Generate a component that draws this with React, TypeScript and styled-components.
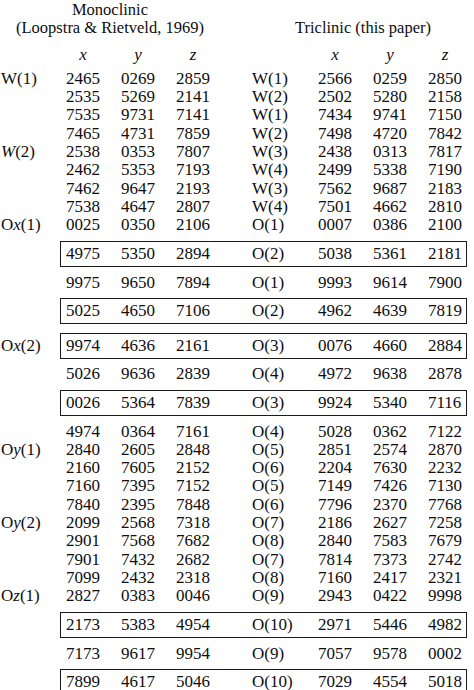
import React from "react";
import styled, { createGlobalStyle } from "styled-components";

const GlobalStyle = createGlobalStyle`
  html, body {
    margin: 0;
    padding: 0;
    background: #ffffff;
  }
  body {
    overflow: hidden;
  }
`;

const Page = styled.div`
  width: 474px;
  padding-top: 1px;
  background: #ffffff;
  color: #0e0e0e;
  font-family: "Liberation Serif", "Times New Roman", serif;
  font-size: 17px;
`;

const TitleRow = styled.div`
  display: grid;
  grid-template-columns: 220px 33px 220px;
  font-size: 16.5px;
  line-height: 17.5px;
`;

const TitleBlock = styled.div<{ $col: number }>`
  grid-column: ${(p) => p.$col};
  align-self: end;
  display: flex;
  flex-direction: column;
  align-items: center;
  white-space: nowrap;
`;

const TitleLine = styled.div`
  height: 17.5px;
`;

const Table = styled.div`
  display: flex;
  flex-direction: column;
  margin-top: 9.85px;
`;

const Row = styled.div<{ $boxed?: boolean; $top: number }>`
  display: flex;
  flex: none;
  height: ${(p) => (p.$boxed ? "26px" : "18.3px")};
  line-height: ${(p) => (p.$boxed ? "24px" : "18.3px")};
  margin-top: ${(p) => p.$top}px;
`;

const Label = styled.div`
  flex: none;
  width: 60px;
  padding-left: 1px;
  box-sizing: border-box;
  white-space: nowrap;
  align-self: center;
`;

const Values = styled.div<{ $boxed?: boolean }>`
  flex: none;
  display: flex;
  align-items: center;
  box-sizing: border-box;
  width: 407px;
  height: 100%;
  padding: 0 4px 0 5px;
  border: 1px solid ${(p) => (p.$boxed ? "#1a1a1a" : "transparent")};
`;

const Cell = styled.div<{ $w: number }>`
  flex: none;
  width: ${(p) => p.$w}px;
  white-space: nowrap;
`;

const AxisMark = styled.span`
  display: block;
  width: 34px;
  text-align: center;
  font-style: italic;
`;

const I = styled.i`
  font-style: italic;
`;

type RowData = {
  left: React.ReactNode;
  l: [string, string, string];
  right: string;
  r: [string, string, string];
  boxed?: boolean;
};

const rows: RowData[] = [
  { left: "W(1)", l: ["2465", "0269", "2859"], right: "W(1)", r: ["2566", "0259", "2850"] },
  { left: "", l: ["2535", "5269", "2141"], right: "W(2)", r: ["2502", "5280", "2158"] },
  { left: "", l: ["7535", "9731", "7141"], right: "W(1)", r: ["7434", "9741", "7150"] },
  { left: "", l: ["7465", "4731", "7859"], right: "W(2)", r: ["7498", "4720", "7842"] },
  { left: <><I>W</I>(2)</>, l: ["2538", "0353", "7807"], right: "W(3)", r: ["2438", "0313", "7817"] },
  { left: "", l: ["2462", "5353", "7193"], right: "W(4)", r: ["2499", "5338", "7190"] },
  { left: "", l: ["7462", "9647", "2193"], right: "W(3)", r: ["7562", "9687", "2183"] },
  { left: "", l: ["7538", "4647", "2807"], right: "W(4)", r: ["7501", "4662", "2810"] },
  { left: <>O<I>x</I>(1)</>, l: ["0025", "0350", "2106"], right: "O(1)", r: ["0007", "0386", "2100"] },
  { left: "", l: ["4975", "5350", "2894"], right: "O(2)", r: ["5038", "5361", "2181"], boxed: true },
  { left: "", l: ["9975", "9650", "7894"], right: "O(1)", r: ["9993", "9614", "7900"] },
  { left: "", l: ["5025", "4650", "7106"], right: "O(2)", r: ["4962", "4639", "7819"], boxed: true },
  { left: <>O<I>x</I>(2)</>, l: ["9974", "4636", "2161"], right: "O(3)", r: ["0076", "4660", "2884"], boxed: true },
  { left: "", l: ["5026", "9636", "2839"], right: "O(4)", r: ["4972", "9638", "2878"] },
  { left: "", l: ["0026", "5364", "7839"], right: "O(3)", r: ["9924", "5340", "7116"], boxed: true },
  { left: "", l: ["4974", "0364", "7161"], right: "O(4)", r: ["5028", "0362", "7122"] },
  { left: <>O<I>y</I>(1)</>, l: ["2840", "2605", "2848"], right: "O(5)", r: ["2851", "2574", "2870"] },
  { left: "", l: ["2160", "7605", "2152"], right: "O(6)", r: ["2204", "7630", "2232"] },
  { left: "", l: ["7160", "7395", "7152"], right: "O(5)", r: ["7149", "7426", "7130"] },
  { left: "", l: ["7840", "2395", "7848"], right: "O(6)", r: ["7796", "2370", "7768"] },
  { left: <>O<I>y</I>(2)</>, l: ["2099", "2568", "7318"], right: "O(7)", r: ["2186", "2627", "7258"] },
  { left: "", l: ["2901", "7568", "7682"], right: "O(8)", r: ["2840", "7583", "7679"] },
  { left: "", l: ["7901", "7432", "2682"], right: "O(7)", r: ["7814", "7373", "2742"] },
  { left: "", l: ["7099", "2432", "2318"], right: "O(8)", r: ["7160", "2417", "2321"] },
  { left: <>O<I>z</I>(1)</>, l: ["2827", "0383", "0046"], right: "O(9)", r: ["2943", "0422", "9998"] },
  { left: "", l: ["2173", "5383", "4954"], right: "O(10)", r: ["2971", "5446", "4982"], boxed: true },
  { left: "", l: ["7173", "9617", "9954"], right: "O(9)", r: ["7057", "9578", "0002"] },
  { left: "", l: ["7899", "4617", "5046"], right: "O(10)", r: ["7029", "4554", "5018"], boxed: true },
];

const W = [55, 55, 76, 66, 55, 55, 34];

function topGap(i: number): number {
  if (i === 0) return 5.7;
  const cur = rows[i];
  const prev = rows[i - 1];
  if (cur.boxed) return prev.boxed ? 8.5 : 6.5;
  if (prev.boxed) return 6.5;
  return 0;
}

export default function App() {
  return (
    <Page>
      <GlobalStyle />
      <TitleRow>
        <TitleBlock $col={1}>
          <TitleLine>Monoclinic</TitleLine>
          <TitleLine>(Loopstra &amp; Rietveld, 1969)</TitleLine>
        </TitleBlock>
        <TitleBlock $col={3}>
          <TitleLine>Triclinic (this paper)</TitleLine>
        </TitleBlock>
      </TitleRow>
      <Table>
        <Row $top={0}>
          <Label />
          <Values>
            <Cell $w={W[0]}><AxisMark>x</AxisMark></Cell>
            <Cell $w={W[1]}><AxisMark>y</AxisMark></Cell>
            <Cell $w={W[2]}><AxisMark>z</AxisMark></Cell>
            <Cell $w={W[3]} />
            <Cell $w={W[4]}><AxisMark>x</AxisMark></Cell>
            <Cell $w={W[5]}><AxisMark>y</AxisMark></Cell>
            <Cell $w={W[6]}><AxisMark>z</AxisMark></Cell>
          </Values>
        </Row>
        {rows.map((row, i) => (
          <Row key={i} $boxed={row.boxed} $top={topGap(i)}>
            <Label>{row.left}</Label>
            <Values $boxed={row.boxed}>
              <Cell $w={W[0]}>{row.l[0]}</Cell>
              <Cell $w={W[1]}>{row.l[1]}</Cell>
              <Cell $w={W[2]}>{row.l[2]}</Cell>
              <Cell $w={W[3]}>{row.right}</Cell>
              <Cell $w={W[4]}>{row.r[0]}</Cell>
              <Cell $w={W[5]}>{row.r[1]}</Cell>
              <Cell $w={W[6]}>{row.r[2]}</Cell>
            </Values>
          </Row>
        ))}
      </Table>
    </Page>
  );
}
